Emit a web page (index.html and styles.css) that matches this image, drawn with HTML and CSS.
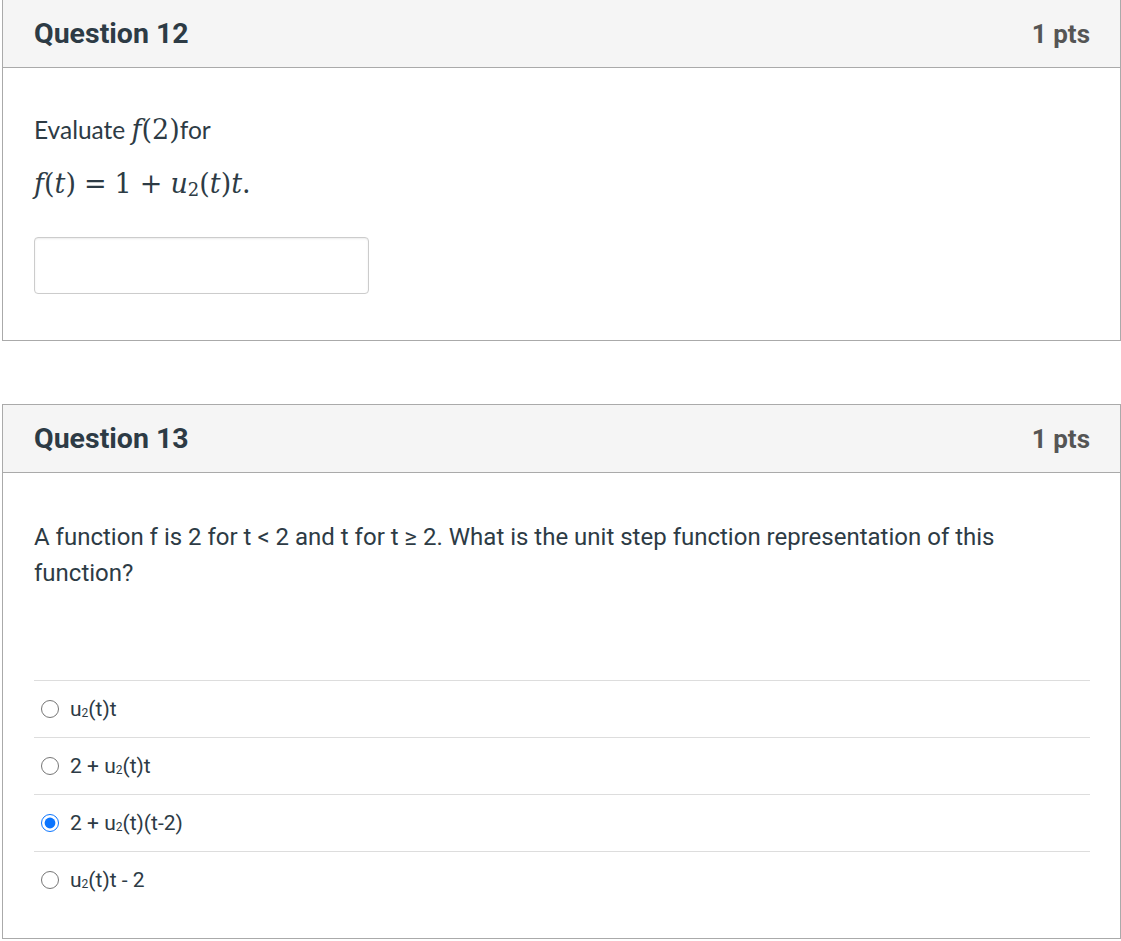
FILE: index.html
```html
<!DOCTYPE html>
<html>
<head>
    <title>Quiz</title>
    <link rel="stylesheet" href="styles.css">
</head>
<body>
    <div class="quiz">
        <div class="question">
            <div class="question-header">
                <h2 class="question-title">Question 12</h2>
                <span class="question-points">1 pts</span>
            </div>
            <div class="question-body">
                <p class="prompt prompt-lato">
                    Evaluate <span class="math"><i>f</i>(2)</span>for
                </p>
                <p class="math-line">
                    <span class="math"><i>f</i>(<i>t</i>)<span class="op">=</span>1<span class="op">+</span><i>u</i><sub>2</sub>(<i>t</i>)<i>t</i>.</span>
                </p>
                <input type="text" class="answer-input">
            </div>
        </div>

        <div class="question">
            <div class="question-header">
                <h2 class="question-title">Question 13</h2>
                <span class="question-points">1 pts</span>
            </div>
            <div class="question-body question-body-choice">
                <p class="prompt">
                    A function f is 2 for t &lt; 2 and t for t &ge; 2. What is the unit step function representation of this function?
                </p>
                <div class="answers">
                    <label class="answer">
                        <input type="radio" name="q13">
                        <span>u<span class="sub">2</span>(t)t</span>
                    </label>
                    <label class="answer">
                        <input type="radio" name="q13">
                        <span>2 + u<span class="sub">2</span>(t)t</span>
                    </label>
                    <label class="answer">
                        <input type="radio" name="q13" checked>
                        <span>2 + u<span class="sub">2</span>(t)(t-2)</span>
                    </label>
                    <label class="answer">
                        <input type="radio" name="q13">
                        <span>u<span class="sub">2</span>(t)t - 2</span>
                    </label>
                </div>
            </div>
        </div>
    </div>
</body>
</html>
```

FILE: styles.css
```css
body {
    font-family: Roboto, "Liberation Sans", sans-serif;
    margin: 0;
    background-color: white;
    color: #2d3b45;
}

.quiz {
    margin-top: -1px;
    padding-left: 2px;
    width: 1119px;
    display: flex;
    flex-direction: column;
    gap: 63px;
}

.question {
    border: 1px solid #aaa;
    background-color: white;
}

.question-header {
    display: flex;
    align-items: center;
    justify-content: space-between;
    height: 67px;
    padding: 0 30px 0 31px;
    background-color: #f5f5f5;
    border-bottom: 1px solid #aaa;
}

.question-title {
    margin: 0;
    font-size: 28.5px;
    font-weight: 700;
    color: #2d3b45;
}

.question-points {
    font-size: 26px;
    font-weight: 700;
    color: #555;
}

.question-body {
    padding: 44px 30px 46px 31px;
}

.question-body-choice {
    padding-top: 46px;
    padding-bottom: 30px;
}

.prompt {
    margin: 0;
    font-size: 24px;
    line-height: 36px;
}

.prompt-lato {
    font-family: Lato, "Liberation Sans", sans-serif;
    font-size: 24.5px;
}

/* KaTeX-like math */
.math {
    font-family: "DejaVu Serif", "Liberation Serif", serif;
    font-size: 27px;
}

.math i {
    font-style: italic;
}

.math .op {
    margin: 0 8px;
}

.math sub {
    font-size: 18px;
    font-style: normal;
    vertical-align: -3px;
    line-height: 0;
}

.math-line {
    margin: 18px 0 0;
    line-height: 36px;
}

.answer-input {
    display: block;
    margin-top: 31px;
    width: 335px;
    height: 57px;
    box-sizing: border-box;
    border: 1px solid #ccc;
    border-radius: 4px;
    box-shadow: inset 0 1px 2px rgba(0, 0, 0, 0.08);
    font-size: 18px;
}

.answers {
    margin-top: 89px;
    border-top: 1px solid #ddd;
}

.answer {
    display: flex;
    align-items: center;
    gap: 11px;
    height: 56px;
    padding-left: 7px;
    border-bottom: 1px solid #ddd;
    font-size: 21px;
    color: #2d3b45;
}

.answer:last-child {
    border-bottom: none;
}

.answer input {
    width: 18px;
    height: 18px;
    margin: 0;
    accent-color: #0b75ff;
}

.sub {
    font-size: 12px;
    vertical-align: -1px;
}
```
